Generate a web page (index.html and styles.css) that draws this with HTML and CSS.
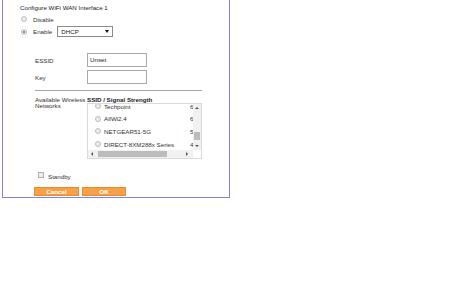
FILE: index.html
```html
<!DOCTYPE html>
<html>
<head>
<meta charset="utf-8">
<link rel="stylesheet" href="styles.css">
</head>
<body>
<div class="panel">
  <div class="title">Configure WiFi WAN Interface 1</div>
  <div class="opt opt1"><span class="radio"></span><span>Disable</span></div>
  <div class="opt opt2"><span class="radio on"></span><span>Enable</span>
    <div class="select"><span>DHCP</span><span class="caret"></span></div>
  </div>
  <div class="fields">
    <div class="label">ESSID</div><div class="input">Unset</div>
    <div class="label">Key</div><div class="input"></div>
  </div>
  <div class="rule"></div>
  <div class="networks">
    <div class="netlabel">Available Wireless<br>Networks</div>
    <div class="netcol">
      <div class="nethead">SSID / Signal Strength</div>
      <div class="listbox">
        <div class="viewport">
          <div class="rows">
            <div class="row"><span class="radio sm"></span><span class="ssid">Techpoint</span><span>68%</span></div>
            <div class="row"><span class="radio sm"></span><span class="ssid">AllWi2.4</span><span>62%</span></div>
            <div class="row"><span class="radio sm"></span><span class="ssid">NETGEAR51-5G</span><span>54%</span></div>
            <div class="row"><span class="radio sm"></span><span class="ssid">DIRECT-8XM288x Series</span><span>46%</span></div>
          </div>
        </div>
        <div class="vbar">
          <span class="arr"><span class="tri up"></span></span>
          <span class="vthumb"></span>
          <span class="arr down-arr"><span class="tri down"></span></span>
        </div>
        <div class="hbar">
          <span class="harr"><span class="tri left"></span></span>
          <span class="hthumb"></span>
          <span class="harr right-arr"><span class="tri right"></span></span>
        </div>
        <div class="corner"></div>
      </div>
    </div>
  </div>
  <div class="standby"><span class="check"></span><span>Standby</span></div>
  <div class="actions">
    <div class="btn cancel">Cancel</div>
    <div class="btn ok">OK</div>
  </div>
</div>
</body>
</html>
```
FILE: styles.css
```css
* { box-sizing: border-box; margin: 0; padding: 0; }
body {
  margin: 0;
  background: #fff;
  font-family: "Liberation Sans", Arial, sans-serif;
  font-size: 6.2px;
  color: #333;
}
.panel {
  margin-left: 2px;
  width: 228px;
  height: 198px;
  border: 1px solid #8a7fd2;
  border-top: none;
  padding-top: 2px;
  display: flex;
  flex-direction: column;
}
.title {
  margin-left: 17px;
  height: 11px;
  line-height: 11px;
  color: #222;
}
.opt {
  display: flex;
  align-items: center;
  margin-left: 18px;
}
.opt1 { height: 10px; margin-top: 1px; }
.opt2 { height: 11px; margin-top: 2px; }
.radio {
  width: 6px;
  height: 6px;
  border-radius: 50%;
  border: 1px solid #bdbdbd;
  background: #ececec;
  margin-right: 6px;
  display: flex;
  align-items: center;
  justify-content: center;
  flex: none;
}
.radio.on::after {
  content: "";
  width: 2px;
  height: 2px;
  border-radius: 50%;
  background: #555;
}
.select {
  margin-left: 5px;
  width: 56px;
  height: 11px;
  border: 1px solid #8a8a8a;
  display: flex;
  align-items: center;
  justify-content: space-between;
  padding: 0 3px 0 3px;
  color: #222;
}
.caret {
  width: 0;
  height: 0;
  border-left: 2px solid transparent;
  border-right: 2px solid transparent;
  border-top: 3px solid #111;
}
.fields {
  margin: 16px 0 0 32px;
  display: grid;
  grid-template-columns: 52px 60px;
  row-gap: 3px;
}
.label { align-self: center; }
.input {
  height: 14px;
  border: 1px solid #a9a9a9;
  padding-left: 2px;
  line-height: 12px;
  color: #222;
}
.rule {
  margin: 6px 0 0 32px;
  width: 167px;
  height: 1px;
  background: #a8a8a8;
}
.networks {
  margin: 5.5px 0 0 32px;
  display: grid;
  grid-template-columns: 52px 115px;
}
.netlabel { line-height: 6px; }
.nethead {
  font-weight: bold;
  line-height: 6.5px;
  color: #222;
}
.listbox {
  height: 56px;
  border: 1px solid #dadada;
  display: grid;
  grid-template-columns: 1fr 8px;
  grid-template-rows: 1fr 8px;
}
.viewport { overflow: hidden; }
.rows { margin-top: -4.35px; }
.row {
  display: flex;
  align-items: center;
  height: 12.7px;
  padding-left: 7px;
  white-space: nowrap;
}
.radio.sm { margin-right: 3px; }
.ssid { width: 86px; flex: none; }
.vbar {
  background: #f1f1f1;
  display: flex;
  flex-direction: column;
  align-items: center;
}
.arr {
  width: 8px;
  height: 8px;
  display: flex;
  align-items: center;
  justify-content: center;
}
.down-arr { margin-top: auto; }
.vthumb {
  margin-top: 20px;
  width: 6px;
  height: 8px;
  background: #bcbcbc;
}
.hbar {
  background: #f1f1f1;
  display: flex;
  align-items: center;
}
.harr {
  width: 8px;
  height: 8px;
  display: flex;
  align-items: center;
  justify-content: center;
}
.right-arr { margin-left: auto; margin-right: 2px; }
.hthumb {
  margin-left: 2px;
  width: 69px;
  height: 6px;
  background: #bcbcbc;
}
.corner { background: #fff; }
.tri { width: 0; height: 0; }
.tri.up { border-left: 2px solid transparent; border-right: 2px solid transparent; border-bottom: 2px solid #555; }
.tri.down { border-left: 2px solid transparent; border-right: 2px solid transparent; border-top: 2px solid #555; }
.tri.left { border-top: 2px solid transparent; border-bottom: 2px solid transparent; border-right: 2px solid #555; }
.tri.right { border-top: 2px solid transparent; border-bottom: 2px solid transparent; border-left: 2px solid #555; }
.standby {
  margin: 13px 0 0 35px;
  height: 10px;
  display: flex;
  align-items: flex-start;
  line-height: 10px;
}
.check {
  width: 6px;
  height: 6px;
  border: 1px solid #b0b0b0;
  background: #ececec;
  margin-right: 4px;
  flex: none;
}
.actions {
  margin: 5px 0 0 31px;
  display: flex;
  gap: 3px;
}
.btn {
  height: 9px;
  background: #f7a046;
  border: 1px solid #e58c31;
  color: #fff;
  font-weight: bold;
  text-align: center;
  line-height: 7px;
}
.cancel { width: 45px; }
.ok { width: 44px; }
```
